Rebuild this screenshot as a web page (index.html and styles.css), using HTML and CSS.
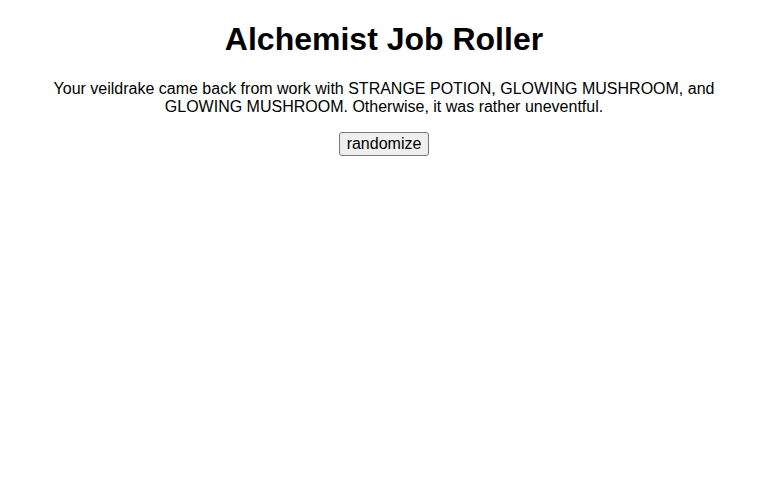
FILE: index.html
```html
<!DOCTYPE html>
<html>
<head>
<meta charset="utf-8">
<title>Alchemist Job Roller</title>
<link rel="stylesheet" href="styles.css">
</head>
<body>
<main class="roller">
  <h1 class="roller-title">Alchemist Job Roller</h1>
  <p class="roller-result">Your veildrake came back from work with STRANGE POTION, GLOWING MUSHROOM, and GLOWING MUSHROOM. Otherwise, it was rather uneventful.</p>
  <button class="roller-button" type="button">randomize</button>
</main>
</body>
</html>
```
FILE: styles.css
```css
body {
  margin: 8px;
  font-family: "Liberation Sans", Arial, sans-serif;
  color: #000;
  background: #fff;
}

.roller {
  text-align: center;
}

.roller-title {
  font-size: 32px;
  font-weight: bold;
  margin: 13px 0 22px;
}

.roller-result {
  font-size: 16px;
  line-height: 18px;
  margin: 0 0 16px;
  padding: 0 45px;
}

.roller-button {
  font-family: "Liberation Sans", Arial, sans-serif;
  font-size: 16px;
  line-height: 18px;
  padding: 2px 7px;
  background: #efefef;
  border: 1px solid #767676;
  border-radius: 3px;
  color: #000;
}
```
